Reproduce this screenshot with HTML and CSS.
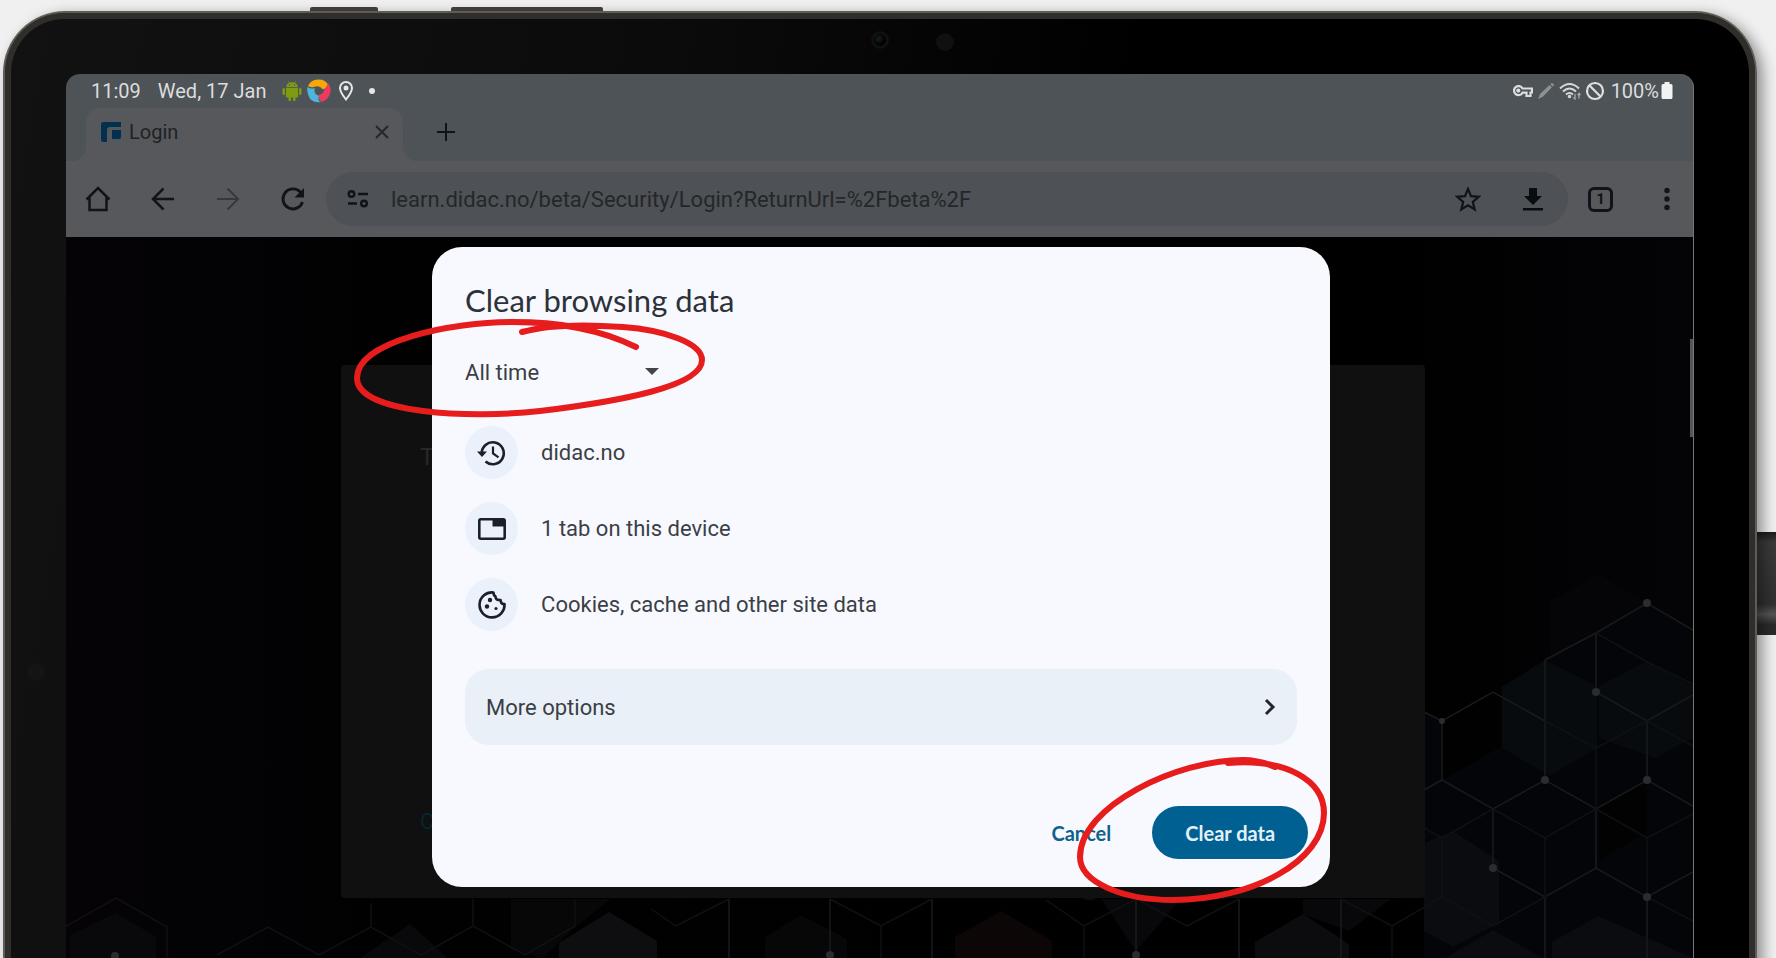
FILE: index.html
```html
<!DOCTYPE html>
<html lang="en">
<head>
    <meta charset="UTF-8">
    <meta name="viewport" content="width=device-width, initial-scale=1.0">
    <title>Clear browsing data</title>
    <link rel="stylesheet" href="styles.css">
</head>
<body>
    <div class="side-pen"></div>
    <div class="device">
        <div class="side-btn side-btn-power"></div>
        <div class="side-btn side-btn-volume"></div>
        <div class="camera"></div>
        <div class="sensor sensor-top"></div>
        <div class="sensor sensor-left"></div>

        <div class="screen">
            <!-- status bar -->
            <div class="status">
                <span>11:09</span>
                <span class="status-date">Wed, 17 Jan</span>
                <svg class="status-android" width="20" height="20" viewBox="0 0 20 20">
                    <path fill="#7d9c12" d="M4 7h12v8.500q0 1-1 1h-1.500v2.500a1.200 1.200 0 0 1-2.500 0v-2.500h-2v2.500a1.200 1.200 0 0 1-2.500 0v-2.500H5q-1 0-1-1zM0.500 8.200a1.200 1.200 0 0 1 2.500 0v4.500a1.200 1.200 0 0 1-2.500 0zM17 8.200a1.200 1.200 0 0 1 2.500 0v4.500a1.200 1.200 0 0 1-2.500 0zM4 6.300Q4.300 3 7 1.800L6 .300l.500-.200 1 1.500q2.500-.800 5 0l1-1.500.500.200-1 1.500Q15.700 3 16 6.300z"/>
                    <circle cx="7.500" cy="4" r=".7" fill="#4d5356"/>
                    <circle cx="12.500" cy="4" r=".7" fill="#4d5356"/>
                </svg>
                <svg class="status-swirl" width="24" height="24" viewBox="0 0 24 24">
                    <path fill="#f7a707" d="M1 7Q4 0 12 .500q6 0 9 5-2 4-5 5-4-5-9-2.500-3 1-6-1z"/>
                    <path fill="#ee3a5f" d="M21 4q3.500 4 2.500 9-2 8-9 10-4-3-3-7 5-.500 6-6 3-2 3.500-6z"/>
                    <path fill="#4fb4dc" d="M.500 8q4 2.500 7.500 1-2 6 4 8-2 4 2 6.200Q3 24.500 1 15q-1.200-4-.500-7z"/>
                </svg>
                <svg class="status-pin" width="14" height="20" viewBox="0 0 14 20" fill="none" stroke="#e6e7e8" stroke-width="2">
                    <path d="M7 18.500Q1 11 1 7a6 6 0 0 1 12 0q0 4-6 11.500z"/>
                    <circle cx="7" cy="7" r="1.500" fill="#e6e7e8"/>
                </svg>
                <span class="status-dot"></span>
                <div class="status-right">
                    <svg width="20" height="14" viewBox="0 0 20 14" fill="none" stroke="#dcdddf" stroke-width="2.200">
                        <path d="M9.500 4.500H19v4h-1.500v3.500h-4V8.700h-4A4.500 4.500 0 1 1 9.500 4.500z"/>
                        <circle cx="5.300" cy="6.600" r="1"/>
                    </svg>
                    <svg width="18" height="18" viewBox="0 0 18 18">
                        <path fill="#8d9193" d="M1 17l2-5L12.500 3l2.500 2.300L5.500 15zM13.300 2.200L15 .700l2.300 2.300-1.500 1.500z"/>
                    </svg>
                    <svg width="22" height="18" viewBox="0 0 22 18" fill="none" stroke="#d5d7d8" stroke-width="2">
                        <path d="M1 6.500q9.500-9 19 0M4 9.500q6.500-6 13 0M7 12.500q3.500-3 7 0"/>
                        <circle cx="10.500" cy="14.500" r=".8"/>
                        <path stroke="#a4a8aa" stroke-width="1.300" d="M16 12v5l-1.500-1.500M20 16.500v-5l-1.500 1.500M20 11.500l1.500 1.500"/>
                    </svg>
                    <svg width="20" height="20" viewBox="0 0 20 20" fill="none" stroke="#dfe0e1" stroke-width="2.200">
                        <circle cx="10" cy="10" r="8"/>
                        <path d="M4.500 4.500l11 11"/>
                    </svg>
                    <span class="status-battery">100%</span>
                    <svg width="12" height="18" viewBox="0 0 12 18">
                        <path fill="#f2f3f3" d="M3.500 0h5v2H10q1.500 0 1.500 1.500v12Q11.500 17 10 17H2Q.500 17 .500 15.500v-12Q.500 2 2 2h1.500z"/>
                    </svg>
                </div>
            </div>

            <!-- tab strip -->
            <div class="tabs">
                <div class="tab">
                    <svg width="20" height="20" viewBox="0 0 20 20">
                        <path fill="#04304f" d="M2 0h18v5H9q-3 0-3 3v12H2q-2 0-2-2V2q0-2 2-2z"/>
                        <path fill="#04304f" d="M11 8h9v7q0 2-2 2h-7z"/>
                    </svg>
                    <span class="tab-title">Login</span>
                    <button class="icon-btn" aria-label="Close tab">
                        <svg width="14" height="14" viewBox="0 0 14 14" fill="none" stroke="#23272b" stroke-width="2"><path d="M1 1l12 12M13 1L1 13"/></svg>
                    </button>
                </div>
                <button class="icon-btn tab-new" aria-label="New tab">
                    <svg width="20" height="20" viewBox="0 0 20 20" fill="none" stroke="#111417" stroke-width="2"><path d="M10 1v18M1 10h18"/></svg>
                </button>
            </div>

            <!-- toolbar -->
            <div class="toolbar">
                <button class="icon-btn" aria-label="Home">
                    <svg width="26" height="26" viewBox="0 0 26 26" fill="none" stroke="#101317" stroke-width="2.500"><path d="M1.500 13.500L13 2l11.500 11.500M4.500 11v13h17V11"/></svg>
                </button>
                <button class="icon-btn" aria-label="Back">
                    <svg width="26" height="26" viewBox="0 0 26 26" fill="none" stroke="#101317" stroke-width="2.500"><path d="M24 13H4M13.500 2.500L3 13l10.500 10.500"/></svg>
                </button>
                <button class="icon-btn" aria-label="Forward">
                    <svg width="26" height="26" viewBox="0 0 26 26" fill="none" stroke="#36393c" stroke-width="2"><path d="M2 13h20M12.500 2.500L23 13 12.500 23.500"/></svg>
                </button>
                <button class="icon-btn" aria-label="Reload">
                    <svg width="26" height="26" viewBox="0 0 26 26"><path fill="none" stroke="#101317" stroke-width="2.800" d="M22.500 16A10 10 0 1 1 20 5.800L22 8"/><path fill="#101317" d="M24 2v9.500h-9.500z"/></svg>
                </button>
                <div class="omnibox">
                    <svg width="22" height="18" viewBox="0 0 22 18" fill="none" stroke="#101317" stroke-width="2.400">
                        <circle cx="4.500" cy="4" r="2.800"/>
                        <circle cx="17" cy="13.500" r="2.800"/>
                        <path d="M11 4h10M1 13.500h9"/>
                    </svg>
                    <input class="url" type="text" aria-label="Address" value="learn.didac.no/beta/Security/Login?ReturnUrl=%2Fbeta%2F">
                    <button class="icon-btn" aria-label="Bookmark">
                        <svg width="26" height="26" viewBox="0 0 26 26" fill="none" stroke="#101317" stroke-width="2.200"><path d="M13 3l3 7.200 7.800.600-6 5.100 1.900 7.600L13 19.400l-6.700 4.100 1.900-7.600-6-5.100 7.800-.600z"/></svg>
                    </button>
                    <button class="icon-btn" aria-label="Download">
                        <svg width="26" height="26" viewBox="0 0 26 26" fill="#0a0c0f"><path d="M9 2h8v8h5l-9 9-9-9h5zM3 22h20v2.500H3z"/></svg>
                    </button>
                </div>
                <button class="icon-btn tab-count" aria-label="Switch tabs">1</button>
                <button class="icon-btn" aria-label="Menu">
                    <svg width="8" height="24" viewBox="0 0 8 24" fill="#101317"><circle cx="4" cy="3.500" r="2.700"/><circle cx="4" cy="12" r="2.700"/><circle cx="4" cy="20.500" r="2.700"/></svg>
                </button>
            </div>

            <!-- page under the dialog -->
            <div class="page">
                <svg class="hexes" viewBox="0 0 1628 721" preserveAspectRatio="xMaxYMax slice" fill="none">
                    <path fill="#050406" d="M1486 363l49-26 47 29v80l-51 18-45-32z"/>
                    <path fill="#040508" d="M1359 475l18 9v59l51-29 52-30v-61l51-27 51-30 46 27v328h-269z"/>
                    <path fill="#080b0d" d="M1437 450l43-27 52 26v62l-47 28-48-28zM1534 449l48-25 46 25v52l-38 20-56-20z"/>
                    <path fill="#020203" d="M1534 572l48-27v50l-48 28z"/>
                    <path fill="#0b0c10" d="M1359 606l29-12 46 30v62l-46 24-29-16zM1487 705l46-26 95 42h-141zM1380 721l48-28 50 28z"/>
                    <path fill="#09080a" d="M5 698l46-22 40 24v21H5zM295 721l50-34 38 34z"/>
                    <path fill="#0e0e10" d="M494 706l50-31 48 29v17h-98z"/>
                    <path fill="#070708" d="M446 662h100l-38 30-30 29-32-8zM700 700l36-22 46 24v19h-82z"/>
                    <path fill="#0c0706" d="M890 700l46-26 51 30v17h-97z"/>
                    <path fill="#0c0c0e" d="M1190 705l48-28 46 30v14h-94z"/>
                    <path fill="#08080a" d="M1238 662h88l-42 32-46-17zM1036 662h80l-45 52z"/>
                    <g stroke="#181b1d" stroke-width="1.500">
                        <path d="M1480 423l51-27 51-30 46 27M1531 396v59l51 29 46-26M1582 484v59M1359 475l18 9 51-29 52 29M1377 484v59l51 29 52-29 51 29 51-29 46 26M1359 553l18-10M1480 423v120M1428 572v59l52 29 51-29 51 29 46-25M1531 572v59M1480 660v61M1582 660v61"/>
                        <path d="M664 662v59M765 662v59M1071 662v59M1174 662v59M1276 662v59M867 662v59"/>
                    </g>
                    <g stroke="#0f1113" stroke-width="1.500">
                        <path d="M1531 396l51 29 46 22M1480 484l51 27 51-27 46 25M1531 511v61l51 29 46-24M1582 601v59l46 24M1428 572l52 29 51-29M1480 601v59l-52 29-51-29v-59l51-29M1377 601l-18-10"/>
                        <path d="M0 690l51-29 51 29v31M0 690v31M152 718l51-28 51 28 52-28 50 28M306 666v24M356 718l52-29 52 29 50-29v-27M408 662v27M765 662l51 27 51-27M816 689v32M1030 662l-11 0M1071 662l51 27 52-27M1019 689v32M1276 662l51 27 50-29M1327 689v32M586 672l25 17 53-27M981 663l38 26 52-27"/>
                    </g>
                    <g fill="#292d31">
                        <circle cx="1582" cy="366" r="4"/><circle cx="1531" cy="455" r="4"/><circle cx="1377" cy="484" r="3"/>
                        <circle cx="1480" cy="543" r="4"/><circle cx="1582" cy="543" r="4"/><circle cx="1428" cy="631" r="4"/>
                        <circle cx="1582" cy="660" r="4"/><circle cx="50" cy="719" r="4"/><circle cx="765" cy="718" r="4"/>
                        <circle cx="1071" cy="718" r="4"/>
                    </g>
                </svg>
                <div class="login-card">
                    <span class="login-text">T</span>
                    <a class="login-link" href="#">C</a>
                </div>
                <div class="scroll-thumb"></div>

                <div class="dialog" role="dialog" aria-labelledby="dialogTitle">
                    <h1 id="dialogTitle">Clear browsing data</h1>
                    <div class="range">
                        <select id="timeRange" aria-label="Time range">
                            <option>All time</option>
                        </select>
                        <svg width="14" height="8" viewBox="0 0 14 8"><path fill="#41454a" d="M0 0h14L7 7z"/></svg>
                    </div>
                    <ul class="summary">
                        <li>
                            <span class="summary-icon">
                                <svg width="30" height="30" viewBox="0 0 30 30" fill="none" stroke="#1b2027" stroke-width="2.600">
                                    <path d="M4.800 16A11 11 0 1 1 8.500 23.500"/>
                                    <path stroke-width="2.200" d="M16 8.500v7l5.500 3.800"/>
                                    <path fill="#1b2027" stroke="none" d="M0 13.500h10l-5 5.500z"/>
                                </svg>
                            </span>
                            didac.no
                        </li>
                        <li>
                            <span class="summary-icon">
                                <svg width="28" height="22" viewBox="0 0 28 22"><rect x="1.300" y="1.300" width="25.400" height="19.400" rx="1.500" fill="none" stroke="#1b2027" stroke-width="2.600"/><path fill="#1b2027" d="M14.500 1H27v7.500H14.500z"/></svg>
                            </span>
                            1 tab on this device
                        </li>
                        <li>
                            <span class="summary-icon">
                                <svg width="28" height="28" viewBox="0 0 28 28">
                                    <path fill="none" stroke="#1b2027" stroke-width="2.600" stroke-linejoin="round" d="M15.500 1.500A12.500 12.500 0 1 0 26.500 13q-3.500.500-4-4-5 .500-5-3.500-2-1-2-4z"/>
                                    <circle cx="12" cy="9" r="2.200" fill="#1b2027"/><circle cx="9" cy="15.500" r="2.200" fill="#1b2027"/><circle cx="18" cy="17.500" r="1.600" fill="#1b2027"/>
                                </svg>
                            </span>
                            Cookies, cache and other site data
                        </li>
                    </ul>
                    <button class="more">
                        More options
                        <svg width="12" height="18" viewBox="0 0 12 18" fill="none" stroke="#22262c" stroke-width="3"><path d="M2 2l7 7-7 7"/></svg>
                    </button>
                    <div class="actions">
                        <button class="btn">Cancel</button>
                        <button class="btn btn-primary">Clear data</button>
                    </div>

                    <!-- hand drawn rings -->
                    <svg class="rings" width="898" height="641" viewBox="0 0 898 641" fill="none" stroke="#e71d1d" stroke-width="6" stroke-linecap="round">
                        <path d="M90 85C115 78 150 77 191 80C232 83 270 96 270 113C270 139 190 154 108 164C40 172-75 167-75 131C-75 94 20 75 81 75C125 75 165 81 204 100"/>
                        <path d="M796 516C855 511 892 534 892 566C892 614 820 653 741 653C690 653 648 635 648 610C648 559 745 513 811 513C824 513 834 516 843 520"/>
                    </svg>
                </div>
            </div>
        </div>
    </div>
</body>
</html>
```

FILE: styles.css
```css
* {
    box-sizing: border-box;
}
body {
    margin: 0;
    height: 100vh;
    overflow: hidden;
    position: relative;
    display: flex;
    padding: 11px 19px 0 3px;
    background: #f0f0f0;
    font-family: Roboto, "Liberation Sans", sans-serif;
    font-size: 22px;
    color: #3b3f45;
}
button, input, select {
    font: inherit;
    color: inherit;
    border: none;
    background: none;
    padding: 0;
    margin: 0;
}
svg {
    flex: none;
    display: block;
}

/* tablet body, its lower edge runs off the window */
.device {
    position: relative;
    flex: 1;
    display: flex;
    margin-bottom: -10px;
    padding: 61px 61px 10px 61px;
    border: 2px solid #5f5c57;
    border-bottom: none;
    border-radius: 62px 62px 0 0;
    background: linear-gradient(100deg, #121212 0%, #0b0b0b 35%, #000 60%);
    box-shadow: inset 0 0 0 6px #302e2a, 6px 4px 14px rgba(0, 0, 0, 0.4);
}
.side-btn {
    position: absolute;
    top: -6px;
    height: 4px;
    background: #3f3d39;
    border-radius: 2px 2px 0 0;
}
.side-btn-power {
    left: 305px;
    width: 68px;
}
.side-btn-volume {
    left: 446px;
    width: 152px;
}
.side-pen {
    position: absolute;
    right: 0;
    top: 532px;
    width: 19px;
    height: 103px;
    background: linear-gradient(#1b1b1b, #3a3a3a 10%, #303030 70%, #555 80%, #2a2a2a 90%);
}
.camera {
    position: absolute;
    left: 866px;
    top: 18px;
    width: 18px;
    height: 18px;
    border-radius: 50%;
    border: 3px solid #101010;
    background: radial-gradient(circle at 40% 40%, #14211e, #000 60%);
}
.sensor {
    position: absolute;
    width: 18px;
    height: 18px;
    border-radius: 50%;
    background: #101010;
}
.sensor-top {
    left: 931px;
    top: 20px;
}
.sensor-left {
    left: 22px;
    top: 650px;
    background: #141414;
}
.screen {
    flex: 1;
    min-width: 0;
    display: flex;
    flex-direction: column;
    overflow: hidden;
    border-radius: 14px 14px 0 0;
    border-right: 1px solid #777;
    background: #4d5356;
}

/* status bar */
.status {
    height: 34px;
    padding: 0 20px 0 25px;
    display: flex;
    align-items: center;
    color: #dcdddf;
    font-size: 20px;
    line-height: 34px;
}
.status-date {
    margin-left: 17px;
}
.status-android {
    margin-left: 16px;
}
.status-swirl {
    margin-left: 5px;
}
.status-pin {
    margin-left: 8px;
}
.status-dot {
    width: 6px;
    height: 6px;
    margin-left: 16px;
    border-radius: 50%;
    background: #e6e7e8;
}
.status-right {
    margin-left: auto;
    display: flex;
    align-items: center;
    gap: 4px;
}
.status-battery {
    margin: 0 -2px 0 2px;
}

/* tab strip */
.tabs {
    height: 53px;
    display: flex;
    align-items: center;
    padding-left: 20px;
}
.tab {
    position: relative;
    width: 317px;
    height: 53px;
    padding: 0 14px 6px 15px;
    display: flex;
    align-items: center;
    background: #57585c;
    border-radius: 14px 14px 0 0;
    color: #1e2226;
    font-size: 20px;
}
/* curved feet of the active tab */
.tab::before,
.tab::after {
    content: "";
    position: absolute;
    bottom: 0;
    width: 14px;
    height: 14px;
}
.tab::before {
    left: -14px;
    background: radial-gradient(circle at 0 0, transparent 14px, #57585c 14px);
}
.tab::after {
    right: -14px;
    background: radial-gradient(circle at 100% 0, transparent 14px, #57585c 14px);
}
.tab-title {
    flex: 1;
    margin-left: 8px;
}
.tab-new {
    margin: 0 0 6px 33px;
}
.icon-btn {
    display: flex;
    align-items: center;
    justify-content: center;
}

/* toolbar */
.toolbar {
    height: 76px;
    display: flex;
    align-items: center;
    gap: 39px;
    padding: 0 22px 0 19px;
    background: #57585c;
}
.omnibox {
    flex: 1;
    height: 54px;
    margin: 0 -19px 0 -19px;
    padding: 0 22px 0 21px;
    display: flex;
    align-items: center;
    gap: 39px;
    border-radius: 27px;
    background: #4e5155;
}
.url {
    flex: 1;
    min-width: 0;
    margin-left: -17px;
    color: #23272a;
}
.tab-count {
    width: 25px;
    height: 25px;
    margin: 0 11px 0 0;
    border: 3px solid #101317;
    border-radius: 6px;
    color: #101317;
    font-size: 15px;
    font-weight: 700;
}

/* page */
.page {
    position: relative;
    flex: 1;
    padding: 128px 268px 60px 275px;
    display: flex;
    background: linear-gradient(90deg, #050306, #010102 20%, #000 80%, #040306);
}
.hexes {
    position: absolute;
    right: 0;
    bottom: 0;
    width: 100%;
    height: 100%;
}
.login-card {
    position: relative;
    flex: 1;
    display: flex;
    flex-direction: column;
    justify-content: space-between;
    padding: 78px 79px 64px;
    border-radius: 4px;
    background: #101010;
}
.login-text {
    color: #26282a;
    font-size: 24px;
}
.login-link {
    color: #06262e;
    text-decoration: none;
}
.scroll-thumb {
    position: absolute;
    right: 0;
    top: 102px;
    width: 3px;
    height: 98px;
    background: #55565a;
}

/* dialog */
.dialog {
    position: absolute;
    top: 10px;
    left: 22.5%;
    width: 55.2%;
    padding: 34px 33px 28px;
    display: flex;
    flex-direction: column;
    border-radius: 30px;
    background: #f7f9ff;
}
.dialog h1 {
    margin: 0;
    font-family: Lato, Roboto, sans-serif;
    font-size: 31px;
    font-weight: 400;
    line-height: 38px;
    color: #2d3138;
}
.range {
    position: relative;
    display: flex;
    align-items: center;
    width: 200px;
    height: 40px;
    margin-top: 33px;
}
.range select {
    width: 100%;
    appearance: none;
}
.range svg {
    position: absolute;
    right: 6px;
    pointer-events: none;
}
.summary {
    list-style: none;
    margin: 34px 0 0;
    padding: 0;
    display: grid;
    gap: 23px;
}
.summary li {
    display: flex;
    align-items: center;
    gap: 23px;
}
.summary-icon {
    width: 53px;
    height: 53px;
    display: flex;
    align-items: center;
    justify-content: center;
    border-radius: 50%;
    background: #ebf1fa;
}
.more {
    height: 76px;
    margin-top: 38px;
    padding: 0 21px;
    display: flex;
    align-items: center;
    justify-content: space-between;
    border-radius: 24px;
    background: #e9f0f8;
}
.actions {
    display: flex;
    justify-content: flex-end;
    gap: 8px;
    margin: 61px -11px 0 0;
}
.btn {
    height: 53px;
    padding: 0 33px;
    border-radius: 27px;
    font-family: Lato, Roboto, sans-serif;
    font-size: 20px;
    font-weight: 700;
    color: #11618c;
}
.btn-primary {
    color: #e4f0f8;
    background: #006092;
}
.rings {
    position: absolute;
    left: 0;
    top: 0;
    overflow: visible;
    pointer-events: none;
}
```
